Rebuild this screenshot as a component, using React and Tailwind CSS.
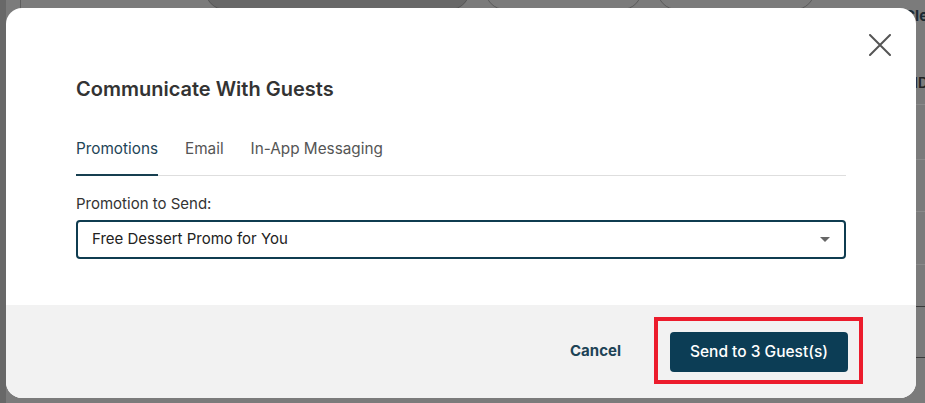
import React from 'react';

const font = { fontFamily: 'Inter, "Noto Sans", sans-serif' };

function Backdrop() {
  // dimmed page behind the dialog
  const rows = [
    ['h-[105px]', 'border-[#8a8a8a]'],
    ['h-[55px]', 'border-[#8a8a8a]'],
    ['h-[52px]', 'border-[#8a8a8a]'],
    ['h-[53px]', 'border-[#8a8a8a]'],
    ['h-[42px]', 'border-[#3a3a3a]'],
    ['h-[51px]', 'border-[#3a3a3a]'],
  ];
  return (
    <div className="absolute inset-0 flex bg-[#7b7b7b]">
      <div className="w-[6px] bg-[#686868]" />
      <div className="flex-1">
        <div className="ml-[14px] h-[8px] w-px bg-[#5e5e5e]" />
      </div>
      <div className="w-[10px] overflow-hidden">
        {rows.map(([h, b], i) => (
          <div key={i} className={`${h} border-b ${b}`} />
        ))}
      </div>
      <div className="absolute left-[205px] top-[-30px] flex items-start gap-[15px]">
        <div className="h-[40px] w-[265px] rounded-full border border-[#555] bg-[#686868]" />
        <div className="h-[40px] w-[157px] rounded-full border border-[#5a5a5a]" />
        <div className="h-[40px] w-[158px] rounded-full border border-[#5a5a5a]" />
      </div>
      <div className="absolute left-[904px] top-[5px] text-[15px] font-bold text-[#1c2a33]">Clea</div>
      <div className="absolute left-[914px] top-[72px] text-[14px] font-semibold text-[#222]">ID</div>
    </div>
  );
}

export default function App() {
  const tabs = ['Promotions', 'Email', 'In-App Messaging'];
  const active = 'Promotions';

  return (
    <div className="relative w-[925px] h-[403px] overflow-hidden pl-[6px] pt-[8px]" style={font}>
      <Backdrop />

      <div className="relative flex h-[390px] w-[910px] flex-col overflow-hidden rounded-[16px] bg-white">
        <button className="absolute right-[25px] top-[26px] text-[#555]">
          <svg width="22" height="22" viewBox="0 0 22 22" fill="none" stroke="currentColor" strokeWidth="2" strokeLinecap="round">
            <path d="M1 1L21 21M21 1L1 21" />
          </svg>
        </button>

        {/* body */}
        <div className="flex-1 px-[70px] pt-[67px]">
          <h2 className="text-[20px] font-semibold leading-[28px] text-[#333]">Communicate With Guests</h2>

          <div className="mt-[35px] flex gap-[27px] border-b border-[#dedede]">
            {tabs.map((t) => (
              <div
                key={t}
                className={`-mb-px pb-[14px] text-[15.3px] leading-[22px] ${
                  t === active ? 'border-b-2 border-[#173f50] text-[#1e4557]' : 'border-b-2 border-transparent text-[#555]'
                }`}
              >
                {t}
              </div>
            ))}
          </div>

          <label className="mt-[18px] block text-[15px] leading-[20px] text-[#333]">Promotion to Send:</label>
          <div className="mt-[6px] flex h-[39px] items-center justify-between rounded-[4px] border-2 border-[#0f3c50] pl-[14px] pr-[14px]">
            <span className="text-[15px] text-[#222]">Free Dessert Promo for You</span>
            <svg width="10" height="5" viewBox="0 0 10 5">
              <path d="M0 0H10L5 5Z" fill="#666" />
            </svg>
          </div>
        </div>

        {/* footer */}
        <div className="flex h-[93px] items-center justify-end gap-[49px] bg-[#f2f2f2] pr-[68px]">
          <button className="text-[15px] font-bold text-[#1d4356]">Cancel</button>
          <div className="relative">
            <button className="h-[40px] w-[178px] rounded-[4px] bg-[#0c3d55] text-[15.5px] font-medium text-white">
              Send to 3 Guest(s)
            </button>
            <div className="pointer-events-none absolute left-[-16px] right-[-15px] top-[-15px] bottom-[-12px] border-4 border-[#ec1c2c]" />
          </div>
        </div>
      </div>
    </div>
  );
}
